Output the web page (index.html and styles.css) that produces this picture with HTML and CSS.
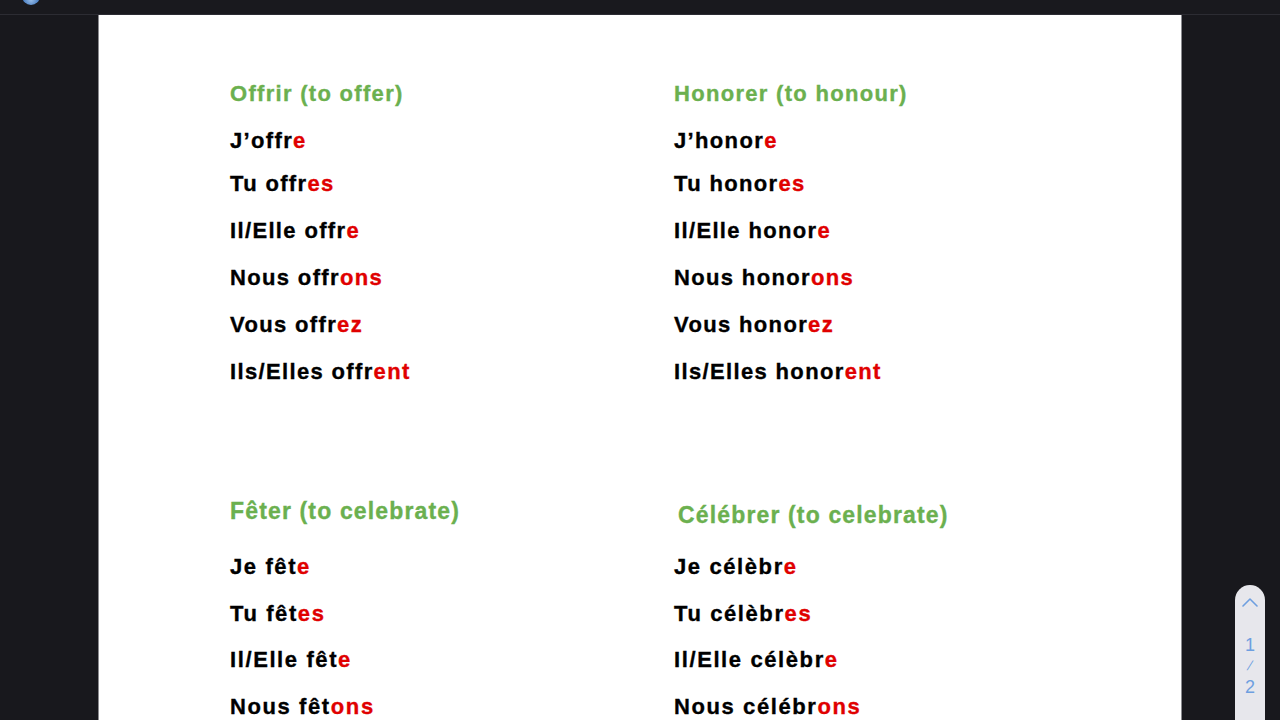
FILE: index.html
```html
<!DOCTYPE html>
<html lang="fr">
<head>
<meta charset="utf-8">
<title>Verbes</title>
<link rel="stylesheet" href="styles.css">
</head>
<body>
<div class="topbar"><span class="avatar"></span></div>
<div class="viewer">
  <div class="page">
    <div class="grid">
      <section class="verb">
        <h2 class="title">Offrir (to offer)</h2>
        <ul class="forms first">
          <li>J’offr<b>e</b></li>
          <li>Tu offr<b>es</b></li>
          <li>Il/Elle offr<b>e</b></li>
          <li>Nous offr<b>ons</b></li>
          <li>Vous offr<b>ez</b></li>
          <li>Ils/Elles offr<b>ent</b></li>
        </ul>
      </section>
      <section class="verb">
        <h2 class="title">Honorer (to honour)</h2>
        <ul class="forms first">
          <li>J’honor<b>e</b></li>
          <li>Tu honor<b>es</b></li>
          <li>Il/Elle honor<b>e</b></li>
          <li>Nous honor<b>ons</b></li>
          <li>Vous honor<b>ez</b></li>
          <li>Ils/Elles honor<b>ent</b></li>
        </ul>
      </section>
      <section class="verb lower">
        <h2 class="title">Fêter (to celebrate)</h2>
        <ul class="forms">
          <li>Je fêt<b>e</b></li>
          <li>Tu fêt<b>es</b></li>
          <li>Il/Elle fêt<b>e</b></li>
          <li>Nous fêt<b>ons</b></li>
        </ul>
      </section>
      <section class="verb lower shifted">
        <h2 class="title">Célébrer (to celebrate)</h2>
        <ul class="forms">
          <li>Je célèbr<b>e</b></li>
          <li>Tu célèbr<b>es</b></li>
          <li>Il/Elle célèbr<b>e</b></li>
          <li>Nous célébr<b>ons</b></li>
        </ul>
      </section>
    </div>
  </div>
</div>
<div class="pager">
  <svg class="chev" width="18" height="10" viewBox="0 0 18 10"><path d="M2 9 L9 2 L16 9" fill="none" stroke="#6e9fe0" stroke-width="1.6" stroke-linecap="round" stroke-linejoin="round"/></svg>
  <span class="num">1</span>
  <span class="sep">/</span>
  <span class="num">2</span>
</div>
</body>
</html>
```
FILE: styles.css
```css
html, body {
  margin: 0;
  padding: 0;
  height: 100%;
  overflow: hidden;
}
body {
  background: #18181d;
  font-family: "Liberation Sans", Arial, sans-serif;
}
.topbar {
  height: 14px;
  border-bottom: 1px solid #2c2c33;
  background: #19191e;
  position: relative;
  overflow: hidden;
}
.avatar {
  position: absolute;
  left: 22px;
  top: -13px;
  width: 18px;
  height: 18px;
  border-radius: 50%;
  background: radial-gradient(circle at 50% 70%, #9cc0ea 0%, #3f76bd 55%, #1f3b66 100%);
}
.viewer {
  display: flex;
  padding-left: 98px;
}
.page {
  width: 1084px;
  height: 720px;
  background: #ffffff;
  border-left: 1px solid #8a8a8f;
  border-right: 1px solid #8a8a8f;
  box-sizing: border-box;
  padding: 67px 0 0 131px;
}
.grid {
  display: grid;
  grid-template-columns: 444px 1fr;
  row-gap: 115px;
}
.title {
  margin: 0;
  height: 24px;
  line-height: 24px;
  font-size: 22px;
  font-weight: bold;
  letter-spacing: 1.3px;
  color: #6bb04f;
  -webkit-text-stroke: 0.35px #6bb04f;
  white-space: nowrap;
}
.forms {
  list-style: none;
  margin: 23px 0 0;
  padding: 0;
  display: flex;
  flex-direction: column;
  gap: 23px;
}
.forms li {
  height: 24px;
  line-height: 24px;
  font-size: 22px;
  font-weight: bold;
  letter-spacing: 1.35px;
  color: #000;
  white-space: nowrap;
  -webkit-text-stroke: 0.35px #000;
}
.forms.first li:first-child {
  margin-bottom: -4px;
}
.forms b {
  color: #e00000;
  -webkit-text-stroke: 0.35px #e00000;
}
.lower .title {
  font-size: 23px;
  letter-spacing: 1.15px;
}
.lower .forms {
  margin-top: 32px;
  gap: 23px;
}
.lower .forms li {
  letter-spacing: 1.6px;
}
.lower .forms li:nth-child(3) {
  margin-top: -1px;
}
.shifted .title {
  padding-left: 4px;
  margin-top: 4px;
}
.shifted .forms {
  margin-top: 28px;
}
.pager {
  position: absolute;
  left: 1235px;
  top: 585px;
  width: 30px;
  height: 160px;
  border-radius: 15px;
  background: #e7e7ec;
  display: flex;
  flex-direction: column;
  align-items: center;
  color: #6e9fe0;
  font-size: 18px;
  line-height: 20px;
}
.chev {
  margin-top: 12px;
  margin-bottom: 28px;
}
.sep {
  font-size: 13px;
  transform: skewX(-20deg);
  line-height: 22px;
}
```
